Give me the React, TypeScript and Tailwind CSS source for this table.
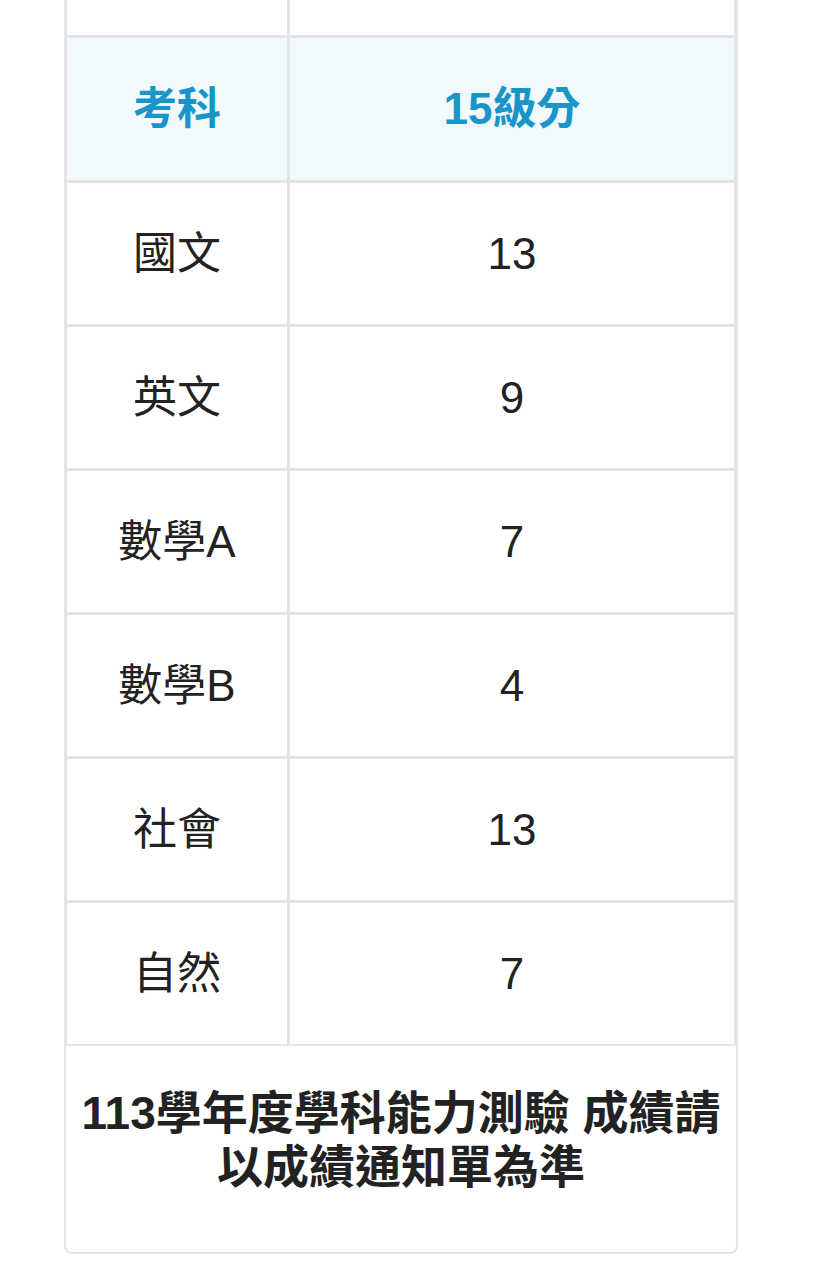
const rows = [
  { subject: "國文", score: "13" },
  { subject: "英文", score: "9" },
  { subject: "數學A", score: "7" },
  { subject: "數學B", score: "4" },
  { subject: "社會", score: "13" },
  { subject: "自然", score: "7" },
]

const font = { fontFamily: '"Liberation Sans", "Noto Sans CJK TC", sans-serif' }

export default function App() {
  return (
    <div className="min-h-[1279px] bg-white" style={font}>
      <div className="ml-[64px] w-[674px] border-2 border-t-0 border-[#e4e5e8] rounded-b-[8px]">
        {/* cut-off row above header */}
        <div className="flex h-[38px] border-b-[3px] border-[#e2e4e8]">
          <div className="w-[224px] border-l border-r-[3px] border-[#e2e4e8]" />
          <div className="flex-1 border-r-2 border-[#e2e4e8]" />
        </div>

        {/* header */}
        <div className="flex h-[145px] border-b-[3px] border-[#e2e4e8] bg-[#f1f9fd] text-[44px] font-bold text-[#1b95c9]">
          <div className="flex w-[224px] items-center justify-center border-l border-r-[3px] border-[#e2e4e8]">
            考科
          </div>
          <div className="flex flex-1 items-center justify-center border-r-2 border-[#e2e4e8]">
            15級分
          </div>
        </div>

        {rows.map((r, i) => (
          <div
            key={r.subject}
            className={`flex text-[44px] text-[#222222] ${
              i === rows.length - 1 ? "h-[141px]" : "h-[144px] border-b-[3px] border-[#e2e4e8]"
            }`}
          >
            <div className="flex w-[224px] items-center justify-center border-l border-r-[3px] border-[#e2e4e8]">
              {r.subject}
            </div>
            <div className="flex flex-1 items-center justify-center border-r-2 border-[#e2e4e8]">
              {r.score}
            </div>
          </div>
        ))}

        {/* note */}
        <div className="h-[208px] border-t-2 border-[#e4e5e8] pt-[40px] text-center text-[46px] font-bold leading-[54px] text-[#222222]">
          <p className="whitespace-nowrap">113學年度學科能力測驗 成績請</p>
          <p className="whitespace-nowrap">以成績通知單為準</p>
        </div>
      </div>
    </div>
  )
}
